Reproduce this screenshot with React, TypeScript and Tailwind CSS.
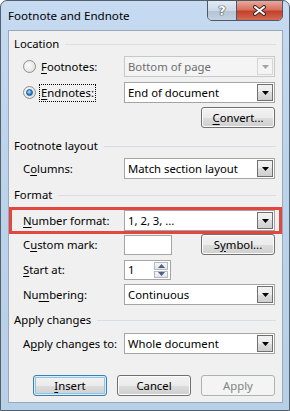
import React from "react";

const font = "font-['Segoe_UI','Noto_Sans',sans-serif] text-[11.3px] leading-[16px]";

function Arrow({ disabled }: { disabled?: boolean }) {
  return (
    <div
      className={`ml-auto mr-px flex w-[16px] self-stretch my-px items-center justify-center border ${
        disabled
          ? "border-[#d5d5d5] bg-[#f4f4f4]"
          : "border-[#707070] bg-[linear-gradient(180deg,#f2f2f2_0%,#ebebeb_50%,#dddddd_50%,#cfcfcf_100%)]"
      }`}
    >
      <svg width="7" height="4" viewBox="0 0 7 4">
        <path d="M0 0h7L3.5 4z" fill={disabled ? "#a3a3a3" : "#000"} />
      </svg>
    </div>
  );
}

function Combo({ value, disabled }: { value: string; disabled?: boolean }) {
  return (
    <div
      className={`flex h-[21px] w-[151px] items-center border ${
        disabled ? "border-[#c5c9cc] bg-[#f4f4f4] text-[#6d6d6d]" : "border-[#a5a5a5] bg-white text-black"
      }`}
    >
      <span className="pl-[3px]">{value}</span>
      <Arrow disabled={disabled} />
    </div>
  );
}

function Button({
  children,
  primary,
  disabled,
}: {
  children: React.ReactNode;
  primary?: boolean;
  disabled?: boolean;
}) {
  let cls =
    "border-[#707070] bg-[linear-gradient(180deg,#f2f2f2_0%,#ebebeb_50%,#dddddd_50%,#cfcfcf_100%)] shadow-[inset_0_0_0_1px_#fcfcfc] text-black";
  if (primary)
    cls =
      "border-[#3c7fb1] bg-[linear-gradient(180deg,#f2f2f2_0%,#ebebeb_50%,#dddddd_50%,#cfcfcf_100%)] shadow-[inset_0_0_0_1px_#d7effc,inset_0_0_0_2px_#8fc4e8] text-black";
  if (disabled) cls = "border-[#adb2b5] bg-[#f4f4f4] text-[#838383]";
  return (
    <div className={`flex h-[21px] w-[74px] items-center justify-center rounded-[3px] border ${cls}`}>
      {children}
    </div>
  );
}

function Header({ text, mt }: { text: string; mt: string }) {
  return (
    <div className={`flex h-[16px] items-center pl-[5px] pr-[6px] ${mt}`}>
      <span>{text}</span>
      <div className="ml-[6px] h-px flex-1 bg-[#d5dfe5]" />
    </div>
  );
}

function Label({ pre, u, post }: { pre?: string; u: string; post: string }) {
  return (
    <div className="w-[115px] shrink-0 pl-[14px]">
      {pre}
      <span className="underline underline-offset-[2px]">{u}</span>
      {post}
    </div>
  );
}

function Radio({ checked }: { checked?: boolean }) {
  return (
    <div className="flex h-[13px] w-[13px] items-center justify-center rounded-full border border-[#8e8f8f] bg-[radial-gradient(circle_at_40%_40%,#ffffff,#d6d6d6)]">
      {checked && (
        <div className="h-[7px] w-[7px] rounded-full border border-[#1b4f8a] bg-[radial-gradient(circle_at_40%_35%,#a8e0ff,#2a86d6_60%,#164f96)]" />
      )}
    </div>
  );
}

export default function App() {
  return (
    <div className={`${font} h-[411px] w-[290px] overflow-hidden bg-white`}>
      <div className="flex h-[411px] w-[290px] flex-col rounded-t-[7px] border border-[#54606e] bg-[linear-gradient(180deg,#c6daf1_0%,#bcd3ec_40%,#b8cfe8_100%)]">
        {/* title bar */}
        <div className="flex h-[29px] shrink-0 items-start">
          <div className="pl-[7px] pt-[7px] text-[11.6px] text-black">Footnote and Endnote</div>
          <div className="ml-auto mr-[6px] mt-[-1px] flex h-[21px] overflow-hidden rounded-b-[5px] border border-[#4b5868]">
            <div className="flex w-[29px] items-center justify-center border-r border-[#4b5868] bg-[linear-gradient(180deg,#e2ebf5_0%,#cdd9e6_50%,#b4c3d3_51%,#c3d2e1_100%)]">
              <span className="font-['DejaVu_Sans',sans-serif] text-[13px] font-bold leading-none text-white [text-shadow:0_0_1px_#2c3540,0_0_1px_#2c3540,0_0_1px_#2c3540]">
                ?
              </span>
            </div>
            <div className="flex w-[45px] items-center justify-center bg-[linear-gradient(180deg,#e9a99b_0%,#d8725f_45%,#c4402b_55%,#d46a52_100%)]">
              <svg width="13" height="11" viewBox="0 0 13 11">
                <path d="M2 2l9 7M11 2l-9 7" stroke="#3a2a28" strokeWidth="4" strokeLinecap="round" />
                <path d="M2 2l9 7M11 2l-9 7" stroke="#fff" strokeWidth="2" strokeLinecap="round" />
              </svg>
            </div>
          </div>
        </div>

        {/* client */}
        <div className="ml-[7px] mr-[6px] flex h-[373px] flex-col border border-[#9aa8b8] bg-[#f0f0f0]">
          <Header text="Location" mt="mt-[5px]" />

          <div className="mt-[4px] flex h-[21px] items-center">
            <div className="flex w-[115px] shrink-0 items-center pl-[14px]">
              <Radio />
              <span className="ml-[5px]">
                <span className="underline underline-offset-[2px]">F</span>ootnotes:
              </span>
            </div>
            <Combo value="Bottom of page" disabled />
          </div>

          <div className="mt-[5px] flex h-[21px] items-center">
            <div className="flex w-[115px] shrink-0 items-center pl-[14px]">
              <Radio checked />
              <span className="ml-[4px] px-px outline-1 outline-dotted outline-black">
                <span className="underline underline-offset-[2px]">E</span>ndnotes:
              </span>
            </div>
            <Combo value="End of document" />
          </div>

          <div className="mt-[4px] flex justify-end pr-[7px]">
            <Button>
              <span className="underline underline-offset-[2px]">C</span>onvert...
            </Button>
          </div>

          <Header text="Footnote layout" mt="mt-[10px]" />

          <div className="mt-[4px] flex h-[21px] items-center">
            <Label pre="C" u="o" post="lumns:" />
            <Combo value="Match section layout" />
          </div>

          <Header text="Format" mt="mt-[8px]" />

          <div className="mt-[4px] flex h-[27px] items-center border-[3px] border-[#e2473f]">
            <div className="w-[112px] shrink-0 pl-[11px]">
              <span className="underline underline-offset-[2px]">N</span>umber format:
            </div>
            <Combo value="1, 2, 3, ..." />
          </div>

          <div className="flex h-[21px] items-center">
            <Label pre="C" u="u" post="stom mark:" />
            <div className="h-[20px] w-[48px] border border-[#a5a5a5] bg-white" />
            <div className="ml-auto pr-[7px]">
              <Button>
                S<span className="underline underline-offset-[2px]">y</span>mbol...
              </Button>
            </div>
          </div>

          <div className="mt-[5px] flex h-[20px] items-center">
            <Label u="S" post="tart at:" />
            <div className="flex h-[20px] w-[47px] items-center border border-[#a5a5a5] bg-white">
              <span className="pl-[3px]">1</span>
              <div className="ml-auto mr-[2px] flex w-[14px] flex-col gap-px self-stretch py-px">
                <div className="flex flex-1 items-center justify-center border border-[#b5b9c0] bg-[linear-gradient(180deg,#f6f6f6,#e2e4e8)]">
                  <svg width="7" height="4" viewBox="0 0 7 4">
                    <path d="M0 4h7L3.5 0z" fill="#4a5f8a" />
                  </svg>
                </div>
                <div className="flex flex-1 items-center justify-center border border-[#b5b9c0] bg-[linear-gradient(180deg,#f6f6f6,#e2e4e8)]">
                  <svg width="7" height="4" viewBox="0 0 7 4">
                    <path d="M0 0h7L3.5 4z" fill="#4a5f8a" />
                  </svg>
                </div>
              </div>
            </div>
          </div>

          <div className="mt-[4px] flex h-[21px] items-center">
            <Label pre="Nu" u="m" post="bering:" />
            <Combo value="Continuous" />
          </div>

          <Header text="Apply changes" mt="mt-[7px]" />

          <div className="mt-[5px] flex h-[21px] items-center">
            <Label pre="A" u="p" post="ply changes to:" />
            <Combo value="Whole document" />
          </div>

          <div className="mt-[21px] flex justify-end gap-[10px] pr-[7px]">
            <Button primary>
              <span className="underline underline-offset-[2px]">I</span>nsert
            </Button>
            <Button>Cancel</Button>
            <Button disabled>Apply</Button>
          </div>
        </div>
      </div>
    </div>
  );
}
